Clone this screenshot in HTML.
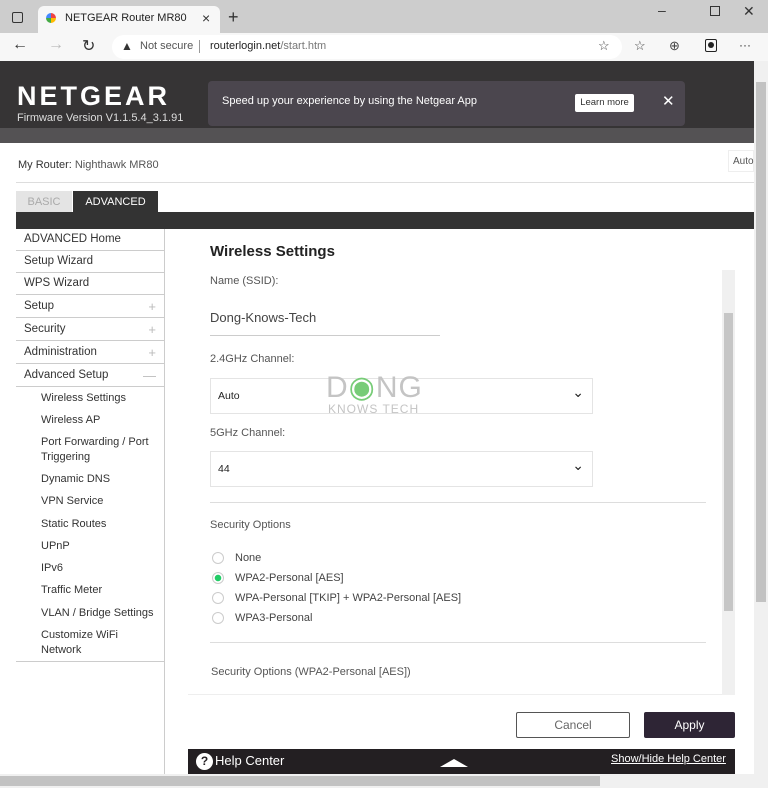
<!DOCTYPE html>
<html><head><meta charset="utf-8"><style>
*{box-sizing:border-box;margin:0;padding:0}
body{width:768px;height:788px;overflow:hidden;background:#fff;font-family:"Liberation Sans",sans-serif;position:relative;color:#333}
.a{position:absolute}
.nav div{position:absolute;left:16px;width:148px;font-size:11.5px;color:#333;padding-left:8px}
.nav .b{border-bottom:1px solid #ccc;height:23px;line-height:23px}
.nav .s{padding-left:25px;line-height:15px;font-size:11px}
.pl{position:absolute;right:8px;color:#bbb;font-size:13px}
.lbl{font-size:11px;color:#555}
.sel{position:absolute;left:210px;width:383px;height:36px;border:1px solid #e4e4e4;background:#fff;font-size:10.5px;line-height:34px;padding-left:7px;color:#222}
.sel:after{content:"⌄";position:absolute;right:8px;top:-4px;font-size:14px}
.r{position:absolute;left:212px;width:12px;height:12px;border:1px solid #ccc;border-radius:50%}
.rt{position:absolute;left:235px;font-size:11px;color:#444}
</style></head><body>
<div class="a" style="left:0;top:0;width:768px;height:33px;background:#cdcdcd"></div>
<div class="a" style="left:12px;top:12px;width:11px;height:11px;border:1.5px solid #333;border-radius:2px"></div>
<div class="a" style="left:38px;top:6px;width:182px;height:27px;background:#f7f7f7;border-radius:6px 6px 0 0"></div>
<div class="a" style="left:46px;top:13px;width:10px;height:10px;border-radius:50%;background:conic-gradient(#e44 0 25%,#fb0 0 50%,#4a4 0 75%,#48f 0)"></div>
<div class="a" style="left:65px;top:12px;font-size:11px;color:#222">NETGEAR Router MR80</div>
<div class="a" style="left:202px;top:10px;font-size:14px;color:#333">×</div>
<div class="a" style="left:228px;top:7px;font-size:18px;color:#333">+</div>
<div class="a" style="left:658px;top:2px;font-size:14px;color:#333">–</div>
<div class="a" style="left:710px;top:6px;width:10px;height:10px;border:1px solid #333"></div>
<div class="a" style="left:743px;top:3px;font-size:14px;color:#333">✕</div>
<div class="a" style="left:0;top:33px;width:768px;height:28px;background:#f7f7f7"></div>
<div class="a" style="left:12px;top:36px;font-size:16px;color:#333">←</div>
<div class="a" style="left:48px;top:36px;font-size:16px;color:#bbb">→</div>
<div class="a" style="left:82px;top:36px;font-size:16px;color:#333">↻</div>
<div class="a" style="left:112px;top:35px;width:510px;height:24px;background:#fff;border-radius:12px"></div>
<div class="a" style="left:121px;top:39px;font-size:12px;color:#333">▲</div>
<div class="a" style="left:140px;top:40px;font-size:11px;color:#555">Not secure</div>
<div class="a" style="left:199px;top:40px;width:1px;height:13px;background:#999"></div>
<div class="a" style="left:210px;top:40px;font-size:11px;color:#222">routerlogin.net<span style="color:#777">/start.htm</span></div>
<div class="a" style="left:598px;top:38px;font-size:13px;color:#444">☆</div>
<div class="a" style="left:634px;top:38px;font-size:13px;color:#444">☆</div>
<div class="a" style="left:669px;top:38px;font-size:13px;color:#444">⊕</div>
<div class="a" style="left:705px;top:39px;width:12px;height:13px;border:1.5px solid #222;border-radius:2px"><div style="width:6px;height:6px;background:#222;border-radius:50%;margin:2px 0 0 2px"></div></div>
<div class="a" style="left:739px;top:38px;font-size:12px;color:#333">···</div>
<div class="a" style="left:0;top:61px;width:754px;height:67px;background:#363435"></div>
<div class="a" style="left:0;top:128px;width:754px;height:15px;background:#545254"></div>
<div class="a" style="left:17px;top:81px;font-size:27px;font-weight:bold;color:#fff;letter-spacing:3px">NETGEAR</div>
<div class="a" style="left:17px;top:112px;font-size:11px;color:#ddd">Firmware Version V1.1.5.4_3.1.91</div>
<div class="a" style="left:208px;top:81px;width:477px;height:45px;background:#4b464e;border-radius:4px"></div>
<div class="a" style="left:222px;top:95px;font-size:11px;color:#fff">Speed up your experience by using the Netgear App</div>
<div class="a" style="left:575px;top:94px;width:59px;height:18px;background:#fff;border-radius:2px;font-size:9.5px;line-height:18px;text-align:center;color:#333">Learn more</div>
<div class="a" style="left:662px;top:92px;font-size:15px;color:#fff">✕</div>
<div class="a" style="left:754px;top:61px;width:14px;height:713px;background:#f0f0f0"></div>
<div class="a" style="left:756px;top:82px;width:10px;height:520px;background:#c2c2c2"></div>
<div class="a" style="left:0;top:774px;width:768px;height:14px;background:#f0f0f0"></div>
<div class="a" style="left:0;top:776px;width:600px;height:10px;background:#c2c2c2"></div>
<div class="a" style="left:18px;top:159px;font-size:11px;color:#333">My Router: <span style="color:#555">Nighthawk MR80</span></div>
<div class="a" style="left:728px;top:150px;width:26px;height:22px;border:1px solid #eee;font-size:10px;color:#555;padding:5px 0 0 4px">Auto</div>
<div class="a" style="left:16px;top:182px;width:738px;height:1px;background:#ddd"></div>
<div class="a" style="left:16px;top:191px;width:56px;height:21px;background:#e4e4e4;font-size:11px;color:#aaa;text-align:center;line-height:22px">BASIC</div>
<div class="a" style="left:73px;top:191px;width:85px;height:21px;background:#333;font-size:11px;color:#fff;text-align:center;line-height:22px">ADVANCED</div>
<div class="a" style="left:16px;top:212px;width:738px;height:17px;background:#333"></div>
<div class="a" style="left:164px;top:229px;width:1px;height:545px;background:#ccc"></div>
<div class="a" style="left:16px;top:661px;width:148px;height:1px;background:#ccc"></div>
<div class="nav">
<div class="b" style="top:228px">ADVANCED Home</div>
<div class="b" style="top:250px">Setup Wizard</div>
<div class="b" style="top:272px">WPS Wizard</div>
<div class="b" style="top:295px">Setup<span class="pl">+</span></div>
<div class="b" style="top:318px">Security<span class="pl">+</span></div>
<div class="b" style="top:341px">Administration<span class="pl">+</span></div>
<div class="b" style="top:364px">Advanced Setup<span class="pl">—</span></div>
<div class="s" style="top:391px">Wireless Settings</div>
<div class="s" style="top:413px">Wireless AP</div>
<div class="s" style="top:435px">Port Forwarding / Port<br>Triggering</div>
<div class="s" style="top:472px">Dynamic DNS</div>
<div class="s" style="top:494px">VPN Service</div>
<div class="s" style="top:517px">Static Routes</div>
<div class="s" style="top:539px">UPnP</div>
<div class="s" style="top:561px">IPv6</div>
<div class="s" style="top:583px">Traffic Meter</div>
<div class="s" style="top:606px">VLAN / Bridge Settings</div>
<div class="s" style="top:628px">Customize WiFi<br>Network</div>
</div>
<div class="a" style="left:210px;top:243px;font-size:15px;font-weight:bold;color:#222">Wireless Settings</div>
<div class="a lbl" style="left:210px;top:275px">Name (SSID):</div>
<div class="a" style="left:210px;top:310px;font-size:13px;color:#444">Dong-Knows-Tech</div>
<div class="a" style="left:210px;top:335px;width:230px;height:1px;background:#ccc"></div>
<div class="a lbl" style="left:210px;top:353px">2.4GHz Channel:</div>
<div class="sel" style="top:378px">Auto</div>
<div class="a" style="left:326px;top:370px;font-size:30px;color:#c4c4c4;letter-spacing:1px">D<span style="color:#7c7">◉</span>NG</div>
<div class="a" style="left:328px;top:402px;font-size:12px;color:#c4c4c4;letter-spacing:1px">KNOWS TECH</div>
<div class="a lbl" style="left:210px;top:427px">5GHz Channel:</div>
<div class="sel" style="top:451px">44</div>
<div class="a" style="left:210px;top:502px;width:496px;height:1px;background:#ddd"></div>
<div class="a lbl" style="left:210px;top:519px">Security Options</div>
<div class="r" style="top:552px"></div><div class="rt" style="top:552px">None</div>
<div class="r" style="top:572px;border-color:#ccc;background:radial-gradient(#2c6 0 3px,#fff 3.5px)"></div><div class="rt" style="top:572px">WPA2-Personal [AES]</div>
<div class="r" style="top:592px"></div><div class="rt" style="top:592px">WPA-Personal [TKIP] + WPA2-Personal [AES]</div>
<div class="r" style="top:612px"></div><div class="rt" style="top:612px">WPA3-Personal</div>
<div class="a" style="left:210px;top:642px;width:496px;height:1px;background:#ddd"></div>
<div class="a lbl" style="left:211px;top:666px">Security Options (WPA2-Personal [AES])</div>
<div class="a" style="left:188px;top:694px;width:535px;height:1px;background:#eee"></div>
<div class="a" style="left:722px;top:270px;width:13px;height:425px;background:#f0f0f0"></div>
<div class="a" style="left:724px;top:313px;width:9px;height:298px;background:#c6c6c6"></div>
<div class="a" style="left:516px;top:712px;width:114px;height:26px;border:1px solid #555;border-radius:2px;font-size:12px;line-height:24px;text-align:center;color:#666">Cancel</div>
<div class="a" style="left:644px;top:712px;width:91px;height:26px;background:#2e2535;border-radius:2px;font-size:12px;line-height:26px;text-align:center;color:#fff">Apply</div>
<div class="a" style="left:188px;top:749px;width:547px;height:25px;background:#231f22"></div>
<div class="a" style="left:196px;top:753px;width:17px;height:17px;border-radius:50%;background:#fff;color:#231f22;font-size:12px;font-weight:bold;text-align:center;line-height:17px">?</div>
<div class="a" style="left:215px;top:753px;font-size:13px;color:#fff">Help Center</div>
<div class="a" style="left:440px;top:759px;width:0;height:0;border-left:14px solid transparent;border-right:14px solid transparent;border-bottom:8px solid #fff"></div>
<div class="a" style="left:611px;top:753px;font-size:11px;color:#fff;text-decoration:underline">Show/Hide Help Center</div>
</body></html>
